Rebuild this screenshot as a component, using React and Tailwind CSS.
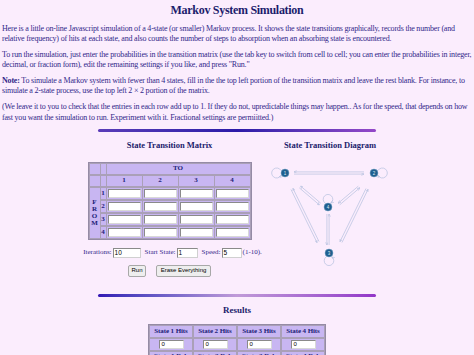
import React from "react";

const LINE = "#b4c0de";

function Pair({ a, b }) {
  const [ax, ay] = a;
  const [bx, by] = b;
  const dx = bx - ax;
  const dy = by - ay;
  const L = Math.hypot(dx, dy);
  const nx = (-dy / L) * 1.1;
  const ny = (dx / L) * 1.1;
  return (
    <g>
      <line x1={ax + nx} y1={ay + ny} x2={bx + nx} y2={by + ny} stroke={LINE} strokeWidth="0.7" markerEnd="url(#ah)" />
      <line x1={bx - nx} y1={by - ny} x2={ax - nx} y2={ay - ny} stroke={LINE} strokeWidth="0.7" markerEnd="url(#ah)" />
    </g>
  );
}

function Node({ x, y, n }) {
  return (
    <g>
      <circle cx={x} cy={y} r="4" fill="#1f5f8f" stroke="#7fa8c8" strokeWidth="0.5" />
      <text x={x} y={y + 1.6} textAnchor="middle" fontSize="4.5" fill="#dfeaf5" fontFamily="Liberation Sans, sans-serif">
        {n}
      </text>
    </g>
  );
}

function Diagram() {
  return (
    <svg width="136" height="110" viewBox="0 0 136 110" className="block">
      <defs>
        <marker id="ah" viewBox="0 0 6 6" refX="5.5" refY="3" markerWidth="3" markerHeight="3" markerUnits="userSpaceOnUse" orient="auto">
          <path d="M0,0.5 L6,3 L0,5.5" fill="none" stroke={LINE} strokeWidth="1.2" />
        </marker>
      </defs>
      <Pair a={[32, 11]} b={[102, 11]} />
      <Pair a={[38, 25]} b={[58, 42]} />
      <Pair a={[30, 27]} b={[56, 80]} />
      <Pair a={[97, 25]} b={[77, 42]} />
      <Pair a={[105, 27]} b={[79, 80]} />
      <Pair a={[66, 52]} b={[66, 83]} />
      <path d="M19,8.5 A5 5 0 1 0 19,13.5" fill="none" stroke={LINE} strokeWidth="0.7" markerEnd="url(#ah)" />
      <path d="M116,8.5 A5 5 0 1 1 116,13.5" fill="none" stroke={LINE} strokeWidth="0.7" markerEnd="url(#ah)" />
      <path d="M63,41 A4.8 4.8 0 1 1 69,41" fill="none" stroke={LINE} strokeWidth="0.7" markerEnd="url(#ah)" />
      <path d="M64,95 A4.8 4.8 0 1 0 70,95" fill="none" stroke={LINE} strokeWidth="0.7" markerEnd="url(#ah)" />
      <Node x={23} y={11} n="1" />
      <Node x={112} y={11} n="2" />
      <Node x={66} y={45} n="4" />
      <Node x={67} y={91} n="3" />
    </svg>
  );
}

function Cell({ children, className = "" }) {
  return (
    <div className={"bg-[#c8b6f2] flex items-center justify-center font-bold text-[7px] leading-none text-[#1c1c78] " + className}>
      {children}
    </div>
  );
}

function InCell() {
  return (
    <div className="bg-[#c8b6f2] flex items-center justify-center">
      <div className="w-[33px] h-[9px] bg-white border border-t-[#8a8a8a] border-l-[#8a8a8a] border-r-[#d8d8d8] border-b-[#d8d8d8]"></div>
    </div>
  );
}

function Matrix() {
  const rows = [1, 2, 3, 4];
  return (
    <div className="grid grid-cols-[10px_5px_35px_35px_35px_35px] grid-rows-[10px_10px_11px_11px_11px_11px] gap-x-[1px] gap-y-[2px] p-[1px] bg-[#aaa0b8] border border-[#958ba5] w-fit">
      <Cell />
      <Cell />
      <Cell className="col-span-4">TO</Cell>
      <Cell />
      <Cell />
      <Cell>1</Cell>
      <Cell>2</Cell>
      <Cell>3</Cell>
      <Cell>4</Cell>
      <div className="row-span-4 bg-[#c8b6f2] flex flex-col items-center justify-center font-bold text-[7px] leading-[7px] text-[#1c1c78]">
        <span>F</span>
        <span>R</span>
        <span>O</span>
        <span>M</span>
      </div>
      {rows.map((r) => (
        <React.Fragment key={r}>
          <Cell className={r === 1 ? "" : "col-start-2"}>{r}</Cell>
          <InCell />
          <InCell />
          <InCell />
          <InCell />
        </React.Fragment>
      ))}
    </div>
  );
}

function SmallInput({ w, v }) {
  return (
    <div className={"h-[10px] bg-white border border-t-[#8a8a8a] border-l-[#8a8a8a] border-r-[#d0d0d0] border-b-[#d0d0d0] flex items-center pl-[1px] font-['Liberation_Sans'] text-[6.5px] text-black " + w}>
      {v}
    </div>
  );
}

function Results() {
  const heads = ["State 1 Hits", "State 2 Hits", "State 3 Hits", "State 4 Hits"];
  const thirds = ["State 1 Rel.", "State 2 Rel.", "State 3 Rel.", "State 4 Rel."];
  return (
    <div className="grid grid-cols-[42px_42px_42px_42px] grid-rows-[11px_11px_11px] gap-[2px] p-[1px] bg-[#aaa0b8] border border-[#958ba5] w-fit">
      {heads.map((h) => (
        <div key={h} className="bg-[#c8b6f2] flex items-center justify-center font-bold text-[7px] leading-none text-[#1c1c78] whitespace-nowrap tracking-[-0.1px]">
          {h}
        </div>
      ))}
      {heads.map((h) => (
        <div key={h + "v"} className="bg-[#c8b6f2] flex items-center justify-center">
          <div className="w-[25px] h-[9px] bg-white border border-t-[#8a8a8a] border-l-[#8a8a8a] border-r-[#d8d8d8] border-b-[#d8d8d8] flex items-center pl-[2px] font-['Liberation_Sans'] text-[6px] text-black">
            0
          </div>
        </div>
      ))}
      {thirds.map((h) => (
        <div key={h} className="bg-[#c8b6f2] flex items-start justify-center pt-[1px] font-bold text-[7px] leading-none text-[#1c1c78] whitespace-nowrap">
          {h}
        </div>
      ))}
    </div>
  );
}

export default function App() {
  return (
    <div className="w-[474px] h-[355px] overflow-hidden bg-[#fbedfd] font-['Liberation_Serif'] text-[#32288a]">
      <h1 className="pt-[3px] text-center text-[12px] leading-[14px] font-bold tracking-[-0.3px] text-[#1c1c6c]">
        Markov System Simulation
      </h1>
      <div className="mt-[7px] px-[2px] text-[8px] leading-[10.3px] tracking-[-0.2px]">
        <p className="mb-[5.5px]">
          Here is a little on-line Javascript simulation of a 4-state (or smaller) Markov process. It shows the state transitions graphically, records the number (and relative frequency) of hits at each state, and also counts the number of steps to absorption when an absorbing state is encountered.
        </p>
        <p className="mb-[5.5px]">
          To run the simulation, just enter the probabilities in the transition matrix (use the tab key to switch from cell to cell; you can enter the probabilities in integer, decimal, or fraction form), edit the remaining settings if you like, and press "Run."
        </p>
        <p className="mb-[5.5px]">
          <b>Note:</b> To simulate a Markov system with fewer than 4 states, fill in the the top left portion of the transition matrix and leave the rest blank. For instance, to simulate a 2-state process, use the top left 2 × 2 portion of the matrix.
        </p>
        <p>
          (We leave it to you to check that the entries in each row add up to 1. If they do not, upredictable things may happen.. As for the speed, that depends on how fast you want the simulation to run. Experiment with it. Fractional settings are permiitted.)
        </p>
      </div>
      <div className="mx-auto mt-[6px] h-[3px] w-[278px] rounded-full bg-linear-to-r from-[#5a3cb8] via-[#2c1aa8] to-[#9448c8]"></div>

      <div className="flex mt-[8px]">
        <div className="ml-[77px] w-[185px] flex flex-col items-center">
          <h2 className="text-[8.5px] leading-[10px] font-bold text-[#1c1c6c]">State Transition Matrix</h2>
          <div className="mt-[12px]">
            <Matrix />
          </div>
          <div className="mt-[8px] flex items-center text-[7px] leading-none ml-[6px]">
            <span>Iterations:</span>
            <SmallInput w="w-[28px] ml-[1px]" v="10" />
            <span className="ml-[4px]">Start State:</span>
            <SmallInput w="w-[21px] ml-[1px]" v="1" />
            <span className="ml-[4px]">Speed:</span>
            <SmallInput w="w-[20px] ml-[1px]" v="5" />
            <span className="ml-[1px]">(1-10).</span>
          </div>
          <div className="mt-[7px] flex gap-[10px] font-['Liberation_Sans'] text-[6px] text-black">
            <button className="w-[18px] h-[12px] bg-[#eeeeee] border border-[#a8a8a8] rounded-[2px] flex items-center justify-center">Run</button>
            <button className="w-[55px] h-[12px] bg-[#eeeeee] border border-[#a8a8a8] rounded-[2px] flex items-center justify-center">Erase Everything</button>
          </div>
        </div>
        <div className="w-[136px] flex flex-col items-center">
          <h2 className="text-[8.5px] leading-[10px] font-bold text-[#1c1c6c] whitespace-nowrap">State Transition Diagram</h2>
          <div className="mt-[12px]">
            <Diagram />
          </div>
        </div>
      </div>

      <div className="mx-auto mt-[17px] h-[3px] w-[278px] rounded-full bg-linear-to-r from-[#3416b4] via-[#c09ad8] to-[#9234c8]"></div>
      <h2 className="mt-[8px] text-center text-[9px] leading-[10px] font-bold text-[#1c1c6c]">Results</h2>
      <div className="mt-[9px] flex justify-center">
        <Results />
      </div>
    </div>
  );
}
